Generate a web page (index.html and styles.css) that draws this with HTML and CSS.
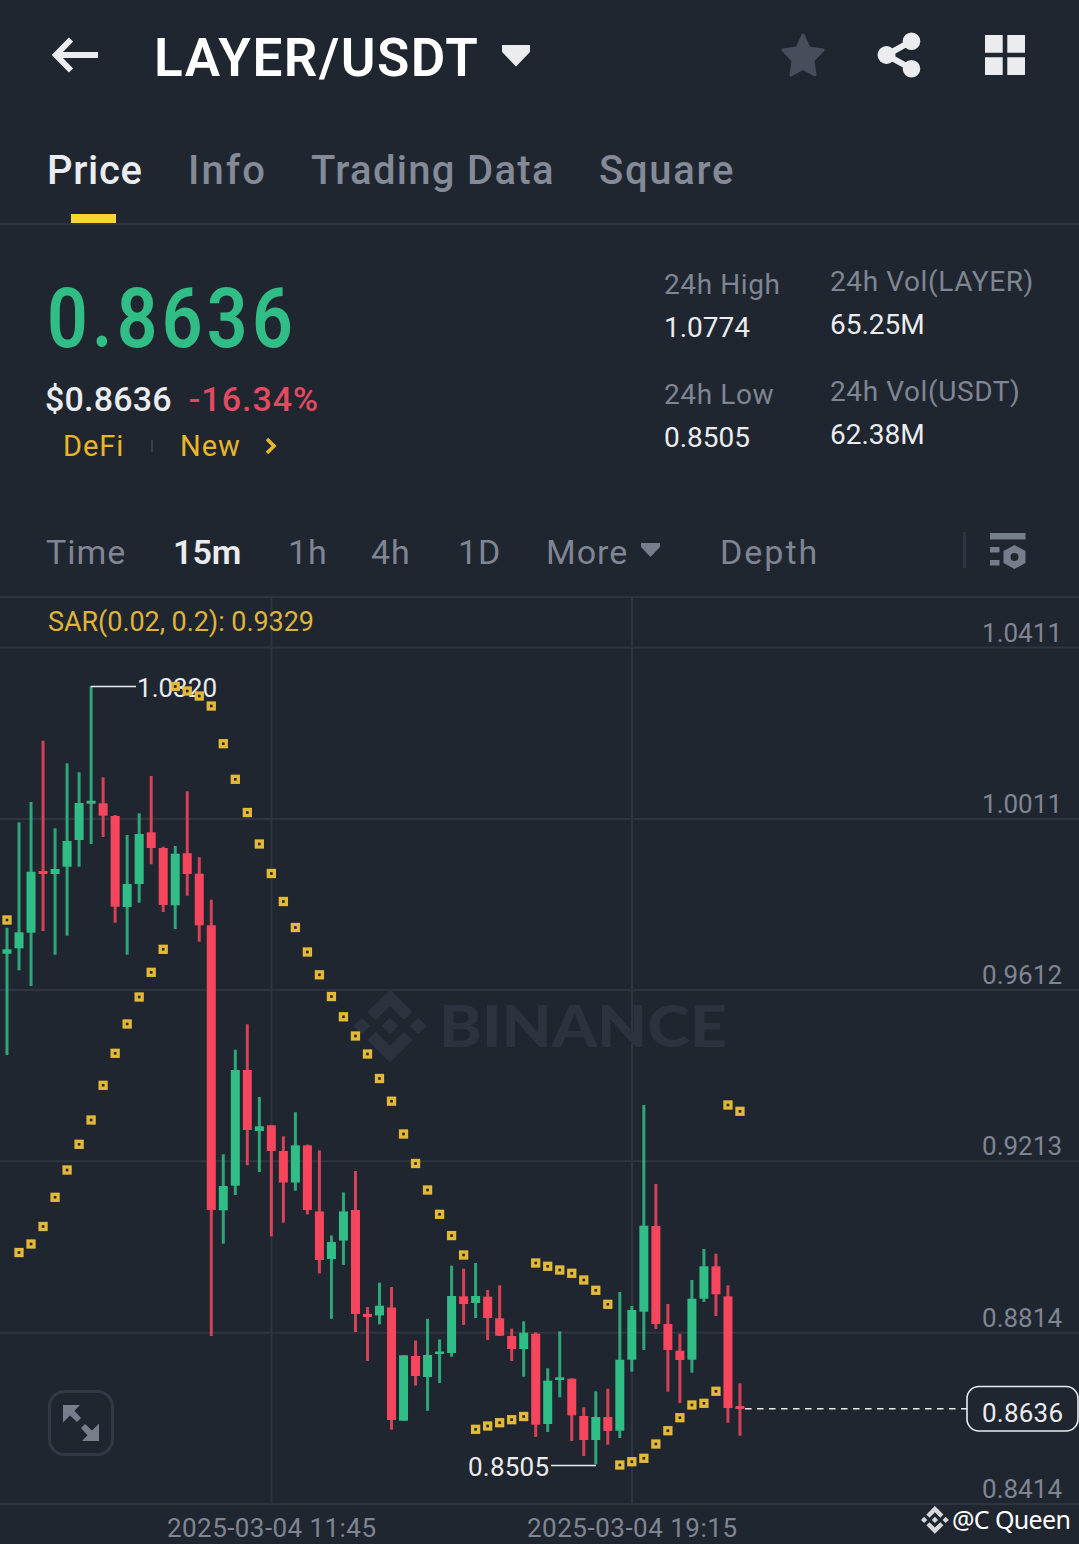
FILE: index.html
```html
<!DOCTYPE html>
<html lang="en">
<head>
    <meta charset="UTF-8">
    <meta name="viewport" content="width=device-width, initial-scale=1.0">
    <title>LAYER/USDT</title>
    <link rel="stylesheet" href="styles.css">
</head>
<body>

<header class="header">
    <svg class="back" width="46" height="36" viewBox="0 0 46 36">
        <path d="M19 2.500L4 18l15 15.500M4 18h42" fill="none" stroke="#eaecef" stroke-width="6"/>
    </svg>
    <h1 class="pair">LAYER/USDT</h1>
    <svg class="pair-caret" width="28" height="22" viewBox="0 0 28 22">
        <path d="M0 0h28v7L14 21.500 0 7z" fill="#eaecef"/>
    </svg>
    <div class="actions">
        <svg width="46" height="46" viewBox="0 0 46 46">
            <path d="M23 3l6 13 14 2-10 10.500 2 14.500-12-6.500-12 6.500 2-14.500L3 18l14-2z" fill="#474d5a" stroke="#474d5a" stroke-width="3" stroke-linejoin="round"/>
        </svg>
        <svg width="44" height="46" viewBox="0 0 44 46">
            <path d="M34.500 9.200L9.500 23l25 13.800" fill="none" stroke="#eaecef" stroke-width="6"/>
            <circle cx="9.500" cy="23" r="9" fill="#eaecef"/>
            <circle cx="34.500" cy="9.200" r="8.800" fill="#eaecef"/>
            <circle cx="34.500" cy="36.800" r="8.800" fill="#eaecef"/>
        </svg>
        <svg width="40" height="40" viewBox="0 0 40 40">
            <path d="M0 0h17.700v17.700H0zM22.300 0H40v17.700H22.300zM0 22.300h17.700V40H0zM22.300 22.300H40V40H22.300z" fill="#eaecef"/>
        </svg>
    </div>
</header>

<nav class="tabs">
    <a class="tab active">Price</a>
    <a class="tab info">Info</a>
    <a class="tab trading">Trading Data</a>
    <a class="tab square">Square</a>
</nav>

<section class="ticker">
    <div class="ticker-main">
        <div class="last-price">0.8636</div>
        <div class="change-row">
            <span class="fiat">$0.8636</span>
            <span class="change">-16.34%</span>
        </div>
        <div class="tags">
            <span>DeFi</span>
            <i class="tag-divider"></i>
            <span>New</span>
            <svg width="12" height="18" viewBox="0 0 12 18">
                <path d="M2 2l7 7-7 7" fill="none" stroke="#e8b52b" stroke-width="3.600"/>
            </svg>
        </div>
    </div>
    <dl class="stats stats-range">
        <dt>24h High</dt>
        <dd>1.0774</dd>
        <dt>24h Low</dt>
        <dd>0.8505</dd>
    </dl>
    <dl class="stats stats-volume">
        <dt>24h Vol(LAYER)</dt>
        <dd>65.25M</dd>
        <dt>24h Vol(USDT)</dt>
        <dd>62.38M</dd>
    </dl>
</section>

<div class="intervals">
    <span>Time</span>
    <span class="active">15m</span>
    <span>1h</span>
    <span>4h</span>
    <span>1D</span>
    <span class="more">More
        <svg width="19" height="14" viewBox="0 0 19 14"><path d="M0 0h19v4L9.500 14 0 4z" fill="#767d8b"/></svg>
    </span>
    <span class="depth">Depth</span>
    <i class="interval-divider"></i>
    <svg class="settings" width="36" height="37" viewBox="0 0 36 37">
        <path d="M0 0h35.500v6.500H0zM0 14h9.500v5.500H0zM0 27h9.500v5.500H0z" fill="#767d8b"/>
        <path fill-rule="evenodd" d="M24.500 12l11 6v12l-11 6-11-6V18zM24.500 20a4 4 0 1 0 0 8 4 4 0 1 0 0-8z" fill="#767d8b"/>
    </svg>
</div>

<svg class="chart" id="chart" width="1079" height="948" viewBox="0 596 1079 948">
    <g id="grid" class="grid"></g>
    <g class="watermark">
        <path transform="translate(353.500 989.500) scale(3.040)" d="M16.624 13.920l2.717 2.715-7.353 7.353-7.353-7.352 2.717-2.716 4.636 4.660 4.636-4.660zm4.637-4.636L24 12l-2.715 2.716L18.568 12l2.692-2.716zm-9.272.001l2.716 2.691-2.716 2.717L9.272 12l2.716-2.715zm-9.272-.001L5.409 12l-2.691 2.692L0 12l2.716-2.716zM11.988.011l7.353 7.329-2.717 2.715-4.636-4.636-4.636 4.660-2.717-2.715z"/>
        <text x="439" y="1046.500" textLength="288" lengthAdjust="spacingAndGlyphs">BINANCE</text>
    </g>
    <g id="candles"></g>

    <path class="marker-line" d="M91 686.500h45M551 1465.500h45"/>
    <text class="marker" x="137" y="697" textLength="80">1.0320</text>
    <text class="marker" x="468" y="1475.500" textLength="81">0.8505</text>

    <g id="sar" class="sar"></g>
    <text class="sar-label" x="48" y="631" textLength="266">SAR(0.02, 0.2): 0.9329</text>

    <g id="axis" class="axis"></g>
    <text class="axis" x="167" y="1537" textLength="209">2025-03-04 11:45</text>
    <text class="axis" x="527" y="1537" textLength="210">2025-03-04 19:15</text>

    <path class="last-line" d="M745 1408.800H967"/>
    <rect class="last-box" x="967" y="1386.500" width="111" height="44.500" rx="12"/>
    <text class="marker" x="982" y="1422" textLength="81">0.8636</text>

    <g class="expand">
        <rect x="49.500" y="1391.500" width="63" height="63" rx="15"/>
        <path d="M63 1405h17l-5.500 5.700 6.500 7.300-4 4-7-6.500-7 7zM99 1441H82l5.500-5.700-6.500-7.300 4-4 7 6.500 7-7z"/>
    </g>

    <path transform="translate(921 1506) scale(1.160)" fill="#d5d7da" d="M16.624 13.920l2.717 2.715-7.353 7.353-7.353-7.352 2.717-2.716 4.636 4.660 4.636-4.660zm4.637-4.636L24 12l-2.715 2.716L18.568 12l2.692-2.716zm-9.272.001l2.716 2.691-2.716 2.717L9.272 12l2.716-2.715zm-9.272-.001L5.409 12l-2.691 2.692L0 12l2.716-2.716zM11.988.011l7.353 7.329-2.717 2.715-4.636-4.636-4.636 4.660-2.717-2.715z"/>
    <text class="author" x="952" y="1529" textLength="119">@C Queen</text>
</svg>

<script src="chart.js"></script>
</body>
</html>
```
FILE: chart.js
```js
// direction, wick top, wick bottom, body top, body bottom, sar
const candles = [
    ['u', 927.7, 1055, 949.3, 953.7, 920],
    ['u', 822.3, 970.3, 932.3, 948.3, 1252.5],
    ['u', 802, 986, 871.7, 932.7, 1244],
    ['d', 740.7, 931, 871, 874, 1226.5],
    ['u', 828.3, 954.7, 869, 874, 1197.3],
    ['u', 763.3, 935.7, 841, 866.7, 1170],
    ['u', 772.3, 866.7, 803, 840, 1144.3],
    ['u', 686, 844, 800.7, 803.7, 1120],
    ['d', 777.3, 837, 803.3, 815.7, 1085.3],
    ['d', 815, 922.7, 816, 906.7, 1053.3],
    ['u', 835, 954.7, 884, 907, 1024],
    ['u', 813.3, 902.7, 834, 884, 997],
    ['d', 776, 864.3, 832.3, 848, 972.3],
    ['d', 846.7, 912, 848, 905, 949.3],
    ['u', 846, 929, 853.7, 905.3, 686.5],
    ['d', 791.3, 895.7, 853.3, 874, 691],
    ['d', 857.3, 941.7, 873.7, 925.3, 696],
    ['d', 899.7, 1336, 925.3, 1210, 706],
    ['u', 1154.3, 1243.7, 1186, 1210.3, 743.7],
    ['u', 1049.7, 1195, 1070, 1185.7, 779.3],
    ['d', 1024.3, 1165.3, 1070, 1130, 812.5],
    ['u', 1097, 1172, 1126.3, 1131, 844],
    ['d', 1125.3, 1236.3, 1125.3, 1151, 873.5],
    ['d', 1136.3, 1222.7, 1151, 1182.5, 901.5],
    ['u', 1112.2, 1190.7, 1145.3, 1182.5, 927.5],
    ['d', 1144.6, 1214.5, 1145.3, 1210, 952],
    ['d', 1150.4, 1273.4, 1211.4, 1260, 974.8],
    ['u', 1235.5, 1318.8, 1242, 1259, 996.5],
    ['u', 1192.4, 1265, 1211.4, 1240.6, 1016.8],
    ['d', 1171, 1332, 1210, 1314, 1036],
    ['d', 1307, 1361, 1314, 1317, 1054],
    ['u', 1282.7, 1324.3, 1305.7, 1315.4, 1078.5],
    ['d', 1287, 1429.7, 1307.5, 1420, 1101.2],
    ['u', 1355.3, 1420.7, 1355.3, 1420.7, 1134],
    ['d', 1340.5, 1385.6, 1356, 1376, 1163.5],
    ['u', 1318.8, 1410.8, 1355, 1377, 1190],
    ['u', 1339.5, 1383, 1351.5, 1354, 1214.3],
    ['u', 1265.7, 1356.7, 1296, 1353, 1235.6],
    ['d', 1268.7, 1325, 1296.3, 1304, 1255],
    ['u', 1263, 1318, 1296, 1303, 1429.3],
    ['d', 1290, 1340, 1296.7, 1318, 1426],
    ['d', 1285.3, 1336, 1318.3, 1335.7, 1422.7],
    ['d', 1328.7, 1361, 1336, 1349, 1419.7],
    ['u', 1321.3, 1376.7, 1332.7, 1349, 1416.5],
    ['d', 1332.3, 1437, 1333.7, 1424.7, 1263],
    ['u', 1368.3, 1432, 1380.7, 1424, 1266.3],
    ['u', 1331.3, 1397.3, 1377.3, 1380, 1270],
    ['d', 1378.3, 1441, 1378.7, 1415.3, 1273.3],
    ['d', 1407.3, 1456, 1416, 1440, 1280],
    ['u', 1391.3, 1464.3, 1417, 1440, 1290.3],
    ['d', 1388.7, 1444.7, 1417, 1431, 1304.3],
    ['u', 1292, 1438, 1359.7, 1430.7, 1465],
    ['u', 1306, 1371.7, 1310, 1359.7, 1461.7],
    ['u', 1105, 1350, 1225.7, 1311.7, 1458.3],
    ['d', 1184, 1329, 1226, 1324, 1444],
    ['d', 1304, 1391.7, 1324, 1350, 1430.7],
    ['d', 1333.7, 1403, 1350.7, 1360, 1417.7],
    ['u', 1280, 1372.7, 1298.7, 1359.7, 1405],
    ['u', 1249, 1302, 1266.3, 1298.7, 1403.3],
    ['d', 1253.7, 1316, 1266.3, 1294.3, 1391.3],
    ['d', 1285.3, 1422.7, 1296.3, 1408, 1105],
    ['d', 1383.3, 1435.7, 1406, 1409, 1111.3]
];

const levels = [
    ['1.0411', 647.5],
    ['1.0011', 819],
    ['0.9612', 990],
    ['0.9213', 1161.3],
    ['0.8814', 1332.7],
    ['0.8414', 1504]
];

let grid = '<path d="M0 597H1079"/><path d="M271.500 597V1504"/><path d="M632 597V1504"/>';
let axis = '';
levels.forEach(([label, y]) => {
    grid += `<path d="M0 ${y}H1079"/>`;
    axis += `<text x="982" y="${y - 6}" textLength="80">${label}</text>`;
});

let bars = '';
let sar = '';
candles.forEach(([dir, high, low, top, bottom, dot], i) => {
    const x = 7 + i * 12.016;
    bars += `<g class="${dir === 'u' ? 'up' : 'down'}">
        <rect class="wick" x="${x - 1.5}" y="${high}" width="3" height="${low - high}"/>
        <rect x="${x - 4.5}" y="${top}" width="9" height="${bottom - top}"/>
    </g>`;
    sar += `<rect x="${x - 3}" y="${dot - 3}" width="6" height="6"/>`;
});

document.getElementById('grid').innerHTML = grid;
document.getElementById('axis').innerHTML = axis;
document.getElementById('candles').innerHTML = bars;
document.getElementById('sar').innerHTML = sar;
```
FILE: styles.css
```css
* {
    box-sizing: border-box;
}

body {
    margin: 0;
    background-color: #1f262f;
    color: #eaecef;
    font-family: Roboto, 'Liberation Sans', sans-serif;
}

.header {
    display: flex;
    align-items: center;
    height: 116px;
    padding: 0 54px 0 52px;
}

.back {
    margin-top: -6px;
}

.pair {
    margin: 0 0 0 56px;
    font-size: 53px;
    font-weight: 600;
    line-height: 116px;
    letter-spacing: 1.5px;
    color: #fff;
}

.pair-caret {
    margin: -4px 0 0 23px;
}

.actions {
    display: flex;
    align-items: center;
    margin: -6px 0 0 auto;
}

.actions svg:nth-child(2) {
    margin: 0 64px 0 51px;
}

.tabs {
    display: grid;
    grid-template-columns: 141px 123px 288px auto;
    height: 109px;
    padding-left: 47px;
    border-bottom: 2px solid #2e3540;
}

.tab {
    justify-self: start;
    position: relative;
    font-size: 40px;
    font-weight: 500;
    line-height: 110px;
    letter-spacing: 1.3px;
    color: #848a97;
}

.tab.active {
    letter-spacing: 0.7px;
    color: #eaecef;
}

.tab.info {
    letter-spacing: 2.2px;
}

.tab.square {
    letter-spacing: 1.7px;
}

.tab.active::after {
    content: '';
    position: absolute;
    left: 24px;
    bottom: 3px;
    width: 45px;
    height: 9px;
    background-color: #fcd535;
}

.ticker {
    display: flex;
    height: 283px;
    padding-left: 47px;
}

.ticker-main {
    width: 617px;
    padding-top: 46px;
}

.last-price {
    font-size: 83px;
    font-weight: 600;
    line-height: 96px;
    letter-spacing: 5px;
    color: #31bd86;
    transform: scaleX(0.86);
    transform-origin: left;
}

.change-row {
    display: flex;
    gap: 17px;
    margin-left: -2px;
    font-size: 34px;
    font-weight: 500;
    line-height: 64px;
    letter-spacing: 0.2px;
}

.change {
    letter-spacing: 1px;
    color: #e24b61;
}

.tags {
    display: flex;
    align-items: center;
    padding-left: 16px;
    font-size: 29px;
    line-height: 30px;
    letter-spacing: 0.9px;
    color: #e8b52b;
}

.tag-divider {
    width: 2px;
    height: 12px;
    margin: 0 27px;
    background-color: #363d48;
}

.tags svg {
    margin-left: 24px;
}

.stats {
    margin: 0;
    font-size: 28px;
    line-height: 43px;
}

.stats-range {
    width: 166px;
    padding-top: 38px;
}

.stats-volume {
    padding-top: 35px;
}

.stats dt {
    letter-spacing: 0.6px;
    color: #7f8592;
}

.stats dd {
    margin: 0 0 24px;
}

.intervals {
    display: grid;
    grid-template-columns: 127px 115px 83px 87px 88px 174px 243px 27px auto;
    align-items: center;
    height: 88px;
    padding-left: 46px;
    font-size: 34px;
    line-height: 88px;
    letter-spacing: 1px;
    color: #7f8592;
}

.intervals .active {
    font-weight: 600;
    letter-spacing: 0;
    color: #eaecef;
}

.intervals .depth {
    letter-spacing: 2px;
}

.more svg {
    margin-left: 3px;
    vertical-align: 7px;
}

.interval-divider {
    width: 3px;
    height: 36px;
    margin-top: -4px;
    background-color: #2e3540;
}

.settings {
    margin-top: -1px;
}

.chart {
    display: block;
}

.grid path {
    fill: none;
    stroke: #2e3540;
    stroke-width: 2;
}

.watermark {
    fill: #2c333e;
    font-family: Lato, sans-serif;
    font-size: 57px;
    font-weight: 900;
}

.up {
    fill: #31bd86;
}

.down {
    fill: #f6465d;
}

.wick {
    opacity: 0.85;
}

.sar rect {
    fill: #2c2a22;
    stroke: #e3b93a;
    stroke-width: 3.3;
}

.sar-label {
    font-size: 27px;
    fill: #dfb43a;
}

.axis {
    font-size: 26px;
    fill: #7f8592;
}

.marker {
    font-size: 26px;
    fill: #eaecef;
}

.marker-line {
    stroke: #eaecef;
    stroke-width: 1.5;
}

.last-line {
    stroke: #eaecef;
    stroke-width: 1.5;
    stroke-dasharray: 6.5 5.5;
}

.last-box {
    fill: #1f262f;
    stroke: #eaecef;
    stroke-width: 1.6;
}

.expand rect {
    fill: #1f262f;
    stroke: #323944;
    stroke-width: 3;
}

.expand path {
    fill: #767d8b;
}

.author {
    font-family: 'Noto Sans', sans-serif;
    font-size: 25px;
    fill: #fff;
}
```
